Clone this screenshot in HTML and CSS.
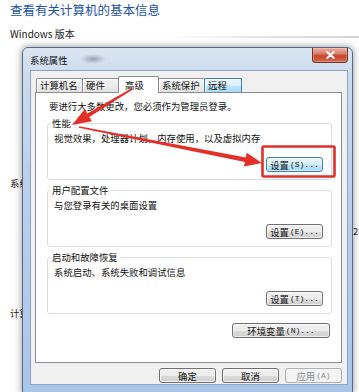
FILE: index.html
```html
<!DOCTYPE html>
<html lang="zh-CN">
<head>
<meta charset="utf-8">
<title>系统属性</title>
<link rel="stylesheet" href="styles.css">
</head>
<body>
<div class="page">
  <h1 class="heading">查看有关计算机的基本信息</h1>
  <div class="section">Windows 版本</div>
  <div class="bg bg-sys">系统</div>
  <div class="bg bg-num">2</div>
  <div class="bg bg-comp">计算机名称、域和工作组设置</div>
</div>

<div class="dialog">
  <div class="titlebar">
    <span class="title">系统属性</span>
    <span class="close"><svg width="9" height="8" viewBox="0 0 9 8"><path d="M1.2 1 L7.8 7 M7.8 1 L1.2 7" stroke="#fff" stroke-width="1.8" stroke-linecap="round"/></svg></span>
  </div>
  <div class="client">
    <div class="tabs">
      <div class="tab t1">计算机名</div>
      <div class="tab t2">硬件</div>
      <div class="tab t3 active">高级</div>
      <div class="tab t4">系统保护</div>
      <div class="tab t5 hover">远程</div>
    </div>
    <div class="panel">
      <div class="intro">要进行大多数更改，您必须作为管理员登录。</div>
      <div class="group">
        <div class="glabel">性能</div>
        <div class="gtext">视觉效果，处理器计划，内存使用，以及虚拟内存</div>
        <div class="gactions"><button class="btn btn-focus">设置<span class="hw">(S)...</span></button></div>
      </div>
      <div class="group">
        <div class="glabel">用户配置文件</div>
        <div class="gtext">与您登录有关的桌面设置</div>
        <div class="gactions"><button class="btn">设置<span class="hw">(E)...</span></button></div>
      </div>
      <div class="group">
        <div class="glabel">启动和故障恢复</div>
        <div class="gtext">系统启动、系统失败和调试信息</div>
        <div class="gactions"><button class="btn">设置<span class="hw">(T)...</span></button></div>
      </div>
      <div class="env-row"><button class="btn btn-env">环境变量<span class="hw">(N)...</span></button></div>
    </div>
    <div class="footer">
      <button class="btn">确定</button>
      <button class="btn">取消</button>
      <button class="btn btn-disabled">应用<span class="hw">(A)</span></button>
    </div>
  </div>
</div>

<svg class="annot" width="359" height="392" viewBox="0 0 359 392">
  <polygon fill="#e5302a" points="131.59,88.31 87.26,113.50 84.69,109.22 72,125 91.89,121.22 89.32,116.94 132.41,89.69"/>
  <polygon fill="#e5302a" points="79.15,126.22 245.76,157.46 246.67,152.85 262,163 243.97,166.59 244.88,161.98 78.85,127.78"/>
  <rect x="262.5" y="146.5" width="72" height="30" rx="1" fill="none" stroke="#e0302b" stroke-width="2.6"/>
</svg>
</body>
</html>
```

FILE: styles.css
```css
* { box-sizing: border-box; }

html, body {
  margin: 0;
  padding: 0;
}

body {
  width: 359px;
  height: 392px;
  overflow: hidden;
  position: relative;
  background: #ffffff;
  color: #111;
  font-family: "Noto Sans CJK SC", "Noto Sans", sans-serif;
  font-size: 9.4px;
  line-height: 12px;
}

.page {
  padding: 3px 0 0 10px;
}

.heading {
  margin: 0;
  font-size: 12.5px;
  line-height: 14px;
  font-weight: normal;
  color: #2352ab;
}

.section {
  display: flex;
  align-items: center;
  margin-top: 11px;
  font-size: 10px;
  line-height: 12px;
  color: #1a1a1a;
}

.section::after {
  content: "";
  flex: 1;
  height: 2px;
  margin-left: 8px;
  margin-top: 6px;
  background: linear-gradient(to right, rgba(220,220,220,0) 0%, rgba(220,220,220,0) 30%, #e0e0e0 70%, #d6d6d6 100%);
}

.bg {
  white-space: nowrap;
  color: #222;
}

.bg-sys { margin-top: 137px; }
.bg-num { margin-top: 36px; padding-left: 343px; }
.bg-comp { margin-top: 70px; }

/* dialog window */
.dialog {
  position: absolute;
  left: 22px;
  top: 47px;
  width: 331px;
  height: 346px;
  display: flex;
  flex-direction: column;
  padding: 0 4px 7px 7px;
  border: 1px solid #56698a;
  border-radius: 6px 6px 0 0;
  background:
    radial-gradient(ellipse 13px 5px at 70px 11px, rgba(80,90,105,0.45), rgba(80,90,105,0)),
    linear-gradient(180deg, #dbe6f3 0px, #cddcee 24px, #bcd2ec 120px, #a9c6e9 346px);
  box-shadow: 0 0 7px 1px rgba(0,0,0,0.35);
}

.titlebar {
  height: 22px;
  display: flex;
  align-items: center;
  flex: none;
}

.title {
  font-size: 9.4px;
  line-height: 12px;
  color: #111;
  margin-top: 1px;
}

.close {
  margin-left: auto;
  align-self: flex-start;
  width: 36px;
  height: 15px;
  display: flex;
  align-items: center;
  justify-content: center;
  border: 1px solid #6a3328;
  border-top: none;
  border-radius: 0 0 4px 4px;
  background: linear-gradient(180deg, #eab0a3 0%, #d9806c 40%, #c7452c 55%, #d4684f 100%);
  box-shadow: inset 0 0 0 1px rgba(255,220,210,0.35);
}

.client {
  flex: 1;
  display: flex;
  flex-direction: column;
  background: #f0f0f0;
  border: 1px solid #8ea4c2;
  padding: 5px 5px 0 4px;
}

/* tabs */
.tabs {
  display: flex;
  align-items: flex-end;
  height: 17px;
  margin-bottom: -1px;
  padding-left: 1px;
  position: relative;
  z-index: 1;
}

.tab {
  height: 14px;
  margin-bottom: 1px;
  margin-left: -1px;
  padding-left: 3px;
  border: 1px solid #898c95;
  border-bottom: none;
  border-radius: 2px 2px 0 0;
  background: linear-gradient(180deg, #f6f6f6 0%, #ececec 50%, #e2e2e2 100%);
  box-shadow: inset 1px 1px 0 rgba(255,255,255,0.8);
  font-size: 9.4px;
  line-height: 12px;
  color: #111;
  white-space: nowrap;
}

.t1 { width: 47px; margin-left: 0; }
.t2 { width: 37px; }
.t3 { width: 41px; }
.t4 { width: 47px; }
.t5 { width: 38px; }

.tab.active {
  height: 17px;
  margin-bottom: 0;
  padding-left: 6px;
  padding-top: 2px;
  background: #ffffff;
  box-shadow: none;
  position: relative;
  z-index: 2;
}

.tab.hover {
  border-color: #3c7fb1;
  background: linear-gradient(180deg, #eaf6fd 0%, #d9f0fc 50%, #bee6fd 50%, #a7d9f5 100%);
  position: relative;
  z-index: 1;
}

/* tab panel */
.panel {
  height: 271px;
  flex: none;
  background: #ffffff;
  border: 1px solid #898c95;
  padding: 0 9px 0 11px;
  display: flex;
  flex-direction: column;
}

.intro {
  margin-top: 7px;
  margin-left: 2px;
}

.group {
  margin-top: 11px;
  border: 1px solid #d7dde3;
  border-radius: 3px;
  padding: 0 8px 7px 6px;
  display: flex;
  flex-direction: column;
}

.group + .group { margin-top: 10px; }

.glabel {
  align-self: flex-start;
  margin-top: -7px;
  margin-left: -4px;
  padding: 0 2px;
  background: #ffffff;
}

.gtext {
  margin-top: 2.5px;
}

.gactions {
  display: flex;
  justify-content: flex-end;
  margin-top: 13.5px;
}

.env-row {
  display: flex;
  justify-content: flex-end;
  margin-top: 9px;
  padding-right: 2px;
}

/* buttons */
.btn {
  width: 57px;
  height: 15px;
  padding: 0;
  margin: 0;
  display: flex;
  align-items: center;
  justify-content: center;
  border: 1px solid #707070;
  border-radius: 3px;
  background: linear-gradient(180deg, #f2f2f2 0%, #ebebeb 50%, #dddddd 50%, #cfcfcf 100%);
  box-shadow: inset 0 0 0 1px rgba(255,255,255,0.65);
  font-family: "Noto Sans CJK SC", "Noto Sans", sans-serif;
  font-size: 9.4px;
  line-height: 12px;
  color: #111;
  white-space: nowrap;
}

.hw {
  font-family: "Liberation Mono", "DejaVu Sans Mono", monospace;
  font-size: 8px;
  margin-left: 1px;
}

.btn-focus {
  border-color: #3c7fb1;
  background: linear-gradient(180deg, #eaf6fd 0%, #d9f0fc 50%, #bee6fd 50%, #a7d9f5 100%);
  box-shadow: inset 0 0 0 1px rgba(255,255,255,0.5);
}

.btn-env { width: 98px; }

.btn-disabled {
  border-color: #adb2b5;
  background: #f4f4f4;
  box-shadow: none;
  color: #8a8a8a;
}

.footer {
  display: flex;
  justify-content: flex-end;
  gap: 6px;
  margin-top: 5px;
}

/* annotations drawn over the screenshot */
.annot {
  position: absolute;
  left: 0;
  top: 0;
  pointer-events: none;
  z-index: 10;
}
```
